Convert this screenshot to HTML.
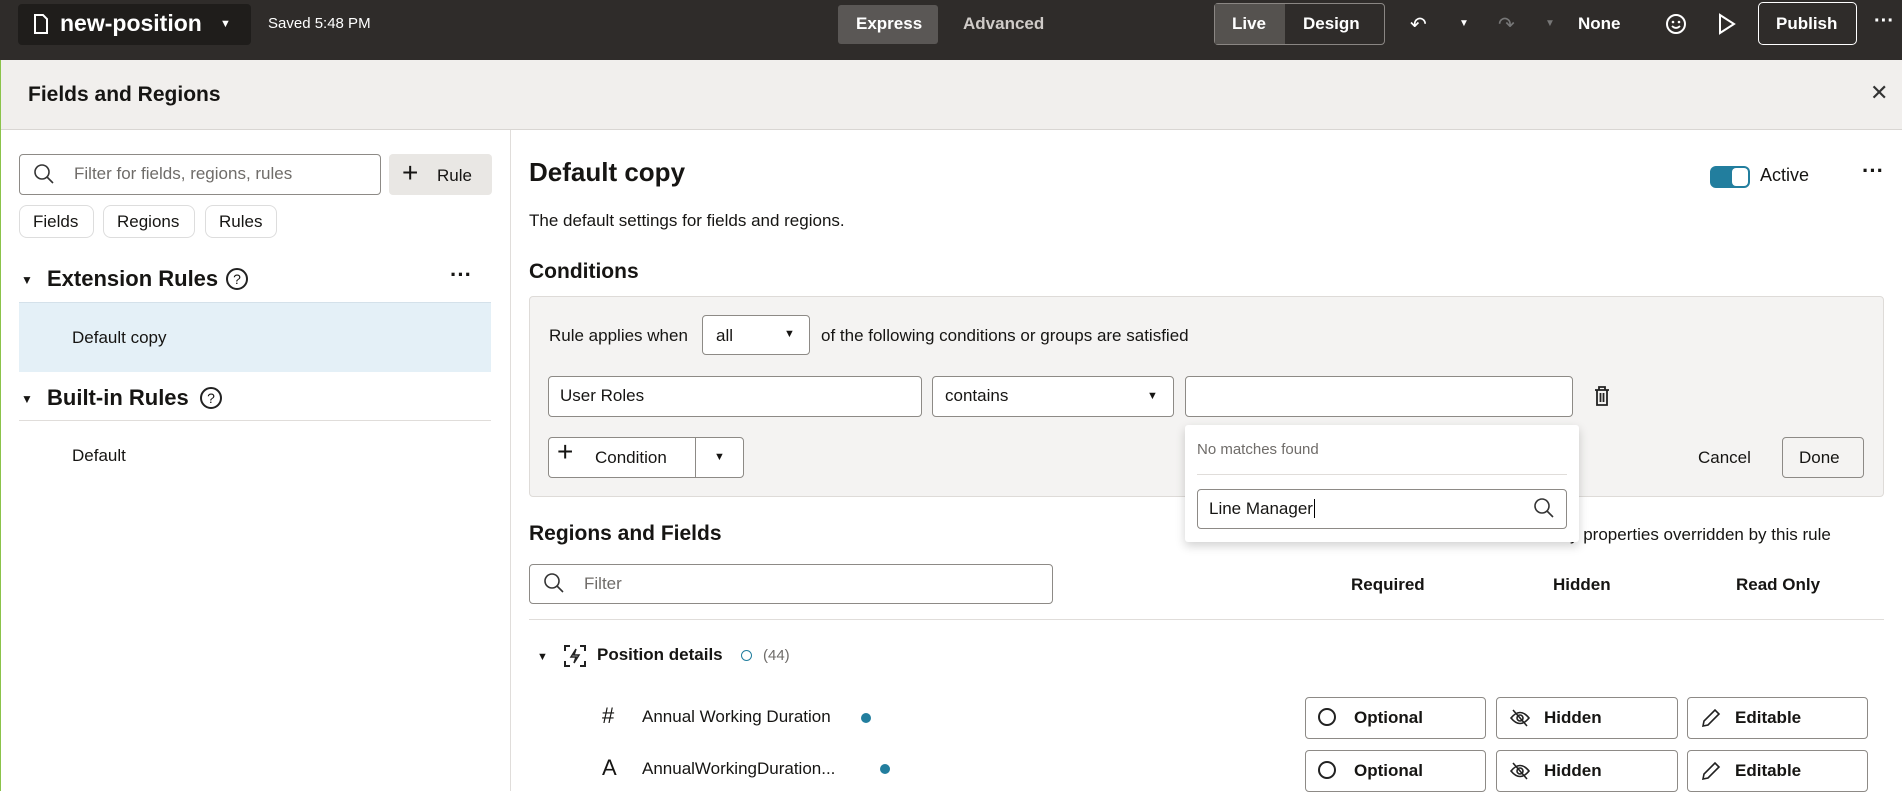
<!DOCTYPE html>
<html><head><meta charset="utf-8"><style>
*{box-sizing:border-box;margin:0;padding:0}
body{width:1902px;height:791px;overflow:hidden;position:relative;background:#fff;font-family:"Liberation Sans",sans-serif;color:#161513}
.a{position:absolute;white-space:nowrap}
.top{left:0;top:0;width:1902px;height:60px;background:#2f2c2a}
.w{color:#fff}
.inp{position:absolute;border:1px solid #8d8a86;border-radius:4px;background:#fff}
.btn{position:absolute;border:1px solid #8d8a86;border-radius:4px;background:#fff;font-size:17px;display:flex;align-items:center}
</style></head><body>
<div class="a top"></div>
<div class="a" style="left:18px;top:4px;width:233px;height:41px;background:#1f1d1b;border-radius:4px"></div>
<svg class="a" style="left:33px;top:14px" width="16" height="20" viewBox="0 0 16 20"><path d="M2 1h8l4 4v14H2z" fill="none" stroke="#fff" stroke-width="2"/></svg>
<div class="a w" style="left:60px;top:10px;font-size:23px;font-weight:bold">new-position</div>
<div class="a w" style="left:220px;top:18px;font-size:11px">▼</div>
<div class="a w" style="left:268px;top:15px;font-size:15px">Saved 5:48 PM</div>
<div class="a" style="left:838px;top:5px;width:100px;height:39px;background:#5a5755;border-radius:3px"></div>
<div class="a w" style="left:856px;top:14px;font-size:17px;font-weight:bold">Express</div>
<div class="a" style="left:963px;top:14px;font-size:17px;font-weight:bold;color:#cfcbc8">Advanced</div>
<div class="a" style="left:1214px;top:3px;width:171px;height:42px;border:1px solid #8a8683;border-radius:4px"></div>
<div class="a" style="left:1215px;top:4px;width:70px;height:40px;background:#55524f"></div>
<div class="a w" style="left:1232px;top:14px;font-size:17px;font-weight:bold">Live</div>
<div class="a w" style="left:1303px;top:14px;font-size:17px;font-weight:bold">Design</div>
<div class="a w" style="left:1410px;top:12px;font-size:20px">↶</div>
<div class="a w" style="left:1459px;top:18px;font-size:10px">▼</div>
<div class="a" style="left:1498px;top:12px;font-size:20px;color:#777">↷</div>
<div class="a" style="left:1545px;top:18px;font-size:10px;color:#777">▼</div>
<div class="a w" style="left:1578px;top:14px;font-size:17px;font-weight:bold">None</div>
<svg class="a" style="left:1665px;top:13px" width="22" height="22" viewBox="0 0 22 22"><circle cx="11" cy="11" r="9" fill="none" stroke="#fff" stroke-width="2"/><circle cx="8" cy="9" r="1.3" fill="#fff"/><circle cx="14" cy="9" r="1.3" fill="#fff"/><path d="M7 13q4 4 8 0" fill="none" stroke="#fff" stroke-width="1.8"/></svg>
<svg class="a" style="left:1718px;top:13px" width="18" height="22" viewBox="0 0 18 22"><path d="M2 2l14 9-14 9z" fill="none" stroke="#fff" stroke-width="2"/></svg>
<div class="a" style="left:1758px;top:2px;width:99px;height:43px;border:1.5px solid #fff;border-radius:5px"></div>
<div class="a w" style="left:1776px;top:14px;font-size:17px;font-weight:bold">Publish</div>
<div class="a w" style="left:1874px;top:10px;font-size:20px;font-weight:bold">···</div>

<div class="a" style="left:0;top:60px;width:1902px;height:70px;background:#f1efed;border-bottom:1px solid #d9d6d3"></div>
<div class="a" style="left:0;top:60px;width:1px;height:731px;background:#8bc34a"></div>
<div class="a" style="left:28px;top:83px;font-size:21px;font-weight:bold">Fields and Regions</div>
<div class="a" style="left:1870px;top:80px;font-size:22px;color:#333">✕</div>
<div class="a" style="left:510px;top:130px;width:1px;height:661px;background:#e0ddda"></div>

<div class="inp" style="left:19px;top:154px;width:362px;height:41px"></div>
<svg class="a" style="left:33px;top:163px" width="22" height="22" viewBox="0 0 22 22"><circle cx="9" cy="9" r="7" fill="none" stroke="#333" stroke-width="1.6"/><path d="M14 14l6 6" stroke="#333" stroke-width="1.6"/></svg>
<div class="a" style="left:74px;top:164px;font-size:17px;color:#6f6c69">Filter for fields, regions, rules</div>
<div class="a" style="left:389px;top:154px;width:103px;height:41px;background:#e9e7e4;border-radius:4px"></div>
<div class="a" style="left:402px;top:157px;font-size:28px;font-weight:300">+</div>
<div class="a" style="left:437px;top:166px;font-size:17px">Rule</div>
<div class="btn" style="left:19px;top:205px;width:75px;height:33px;border-color:#ddd;border-radius:8px;padding-left:13px">Fields</div>
<div class="btn" style="left:103px;top:205px;width:92px;height:33px;border-color:#ddd;border-radius:8px;padding-left:13px">Regions</div>
<div class="btn" style="left:205px;top:205px;width:72px;height:33px;border-color:#ddd;border-radius:8px;padding-left:13px">Rules</div>
<div class="a" style="left:21px;top:273px;font-size:12px">▼</div>
<div class="a" style="left:47px;top:266px;font-size:22px;font-weight:bold">Extension Rules</div>
<div class="a" style="left:226px;top:268px;width:22px;height:22px;border:2px solid #222;border-radius:50%;font-size:14px;text-align:center;line-height:18px">?</div>
<div class="a" style="left:450px;top:262px;font-size:22px;font-weight:bold">···</div>
<div class="a" style="left:19px;top:302px;width:472px;height:70px;background:#e4f0f7;border-top:1px solid #d4e1ea"></div>
<div class="a" style="left:72px;top:328px;font-size:17px">Default copy</div>
<div class="a" style="left:21px;top:392px;font-size:12px">▼</div>
<div class="a" style="left:47px;top:385px;font-size:22px;font-weight:bold">Built-in Rules</div>
<div class="a" style="left:200px;top:387px;width:22px;height:22px;border:2px solid #222;border-radius:50%;font-size:14px;text-align:center;line-height:18px">?</div>
<div class="a" style="left:19px;top:420px;width:472px;height:1px;background:#e0ddda"></div>
<div class="a" style="left:72px;top:446px;font-size:17px">Default</div>

<div class="a" style="left:529px;top:157px;font-size:26px;font-weight:bold">Default copy</div>
<div class="a" style="left:1710px;top:166px;width:40px;height:22px;background:#227e9e;border-radius:6px"></div>
<div class="a" style="left:1732px;top:168px;width:16px;height:18px;background:#fff;border-radius:4px"></div>
<div class="a" style="left:1760px;top:165px;font-size:18px">Active</div>
<div class="a" style="left:1862px;top:158px;font-size:22px;font-weight:bold">···</div>
<div class="a" style="left:529px;top:211px;font-size:17px">The default settings for fields and regions.</div>
<div class="a" style="left:529px;top:260px;font-size:21px;font-weight:bold">Conditions</div>
<div class="a" style="left:529px;top:296px;width:1355px;height:201px;background:#f4f3f2;border:1px solid #dedbd8;border-radius:4px"></div>
<div class="a" style="left:549px;top:326px;font-size:17px">Rule applies when</div>
<div class="inp" style="left:702px;top:315px;width:108px;height:40px"></div>
<div class="a" style="left:716px;top:326px;font-size:17px">all</div>
<div class="a" style="left:784px;top:328px;font-size:11px">▼</div>
<div class="a" style="left:821px;top:326px;font-size:17px">of the following conditions or groups are satisfied</div>
<div class="inp" style="left:548px;top:376px;width:374px;height:41px"></div>
<div class="a" style="left:560px;top:386px;font-size:17px">User Roles</div>
<div class="inp" style="left:932px;top:376px;width:242px;height:41px"></div>
<div class="a" style="left:945px;top:386px;font-size:17px">contains</div>
<div class="a" style="left:1147px;top:390px;font-size:11px">▼</div>
<div class="inp" style="left:1185px;top:376px;width:388px;height:41px"></div>
<svg class="a" style="left:1593px;top:385px" width="18" height="22" viewBox="0 0 18 22"><path d="M2 5h14M6 5V2h6v3M4 5v15h10V5M7.5 8v9M10.5 8v9" fill="none" stroke="#222" stroke-width="1.8"/></svg>
<div class="btn" style="left:548px;top:437px;width:196px;height:41px"></div>
<div class="a" style="left:557px;top:436px;font-size:28px;font-weight:300">+</div>
<div class="a" style="left:595px;top:448px;font-size:17px">Condition</div>
<div class="a" style="left:695px;top:438px;width:1px;height:39px;background:#8d8a86"></div>
<div class="a" style="left:714px;top:451px;font-size:11px">▼</div>
<div class="a" style="left:1698px;top:448px;font-size:17px">Cancel</div>
<div class="btn" style="left:1782px;top:437px;width:82px;height:41px;background:#f4f3f2;padding-left:16px">Done</div>

<div class="a" style="left:529px;top:522px;font-size:21px;font-weight:bold">Regions and Fields</div>
<div class="a" style="left:1570px;top:525px;font-size:17px">y properties overridden by this rule</div>
<div class="inp" style="left:529px;top:564px;width:524px;height:40px"></div>
<svg class="a" style="left:543px;top:572px" width="22" height="22" viewBox="0 0 22 22"><circle cx="9" cy="9" r="7" fill="none" stroke="#333" stroke-width="1.6"/><path d="M14 14l6 6" stroke="#333" stroke-width="1.6"/></svg>
<div class="a" style="left:584px;top:574px;font-size:17px;color:#6f6c69">Filter</div>
<div class="a" style="left:1351px;top:575px;font-size:17px;font-weight:bold">Required</div>
<div class="a" style="left:1553px;top:575px;font-size:17px;font-weight:bold">Hidden</div>
<div class="a" style="left:1736px;top:575px;font-size:17px;font-weight:bold">Read Only</div>
<div class="a" style="left:529px;top:619px;width:1355px;height:1px;background:#e0ddda"></div>

<div class="a" style="left:537px;top:651px;font-size:11px">▼</div>
<svg class="a" style="left:564px;top:645px" width="22" height="22" viewBox="0 0 22 22"><path d="M1 6V1h5M16 1h5v5M21 16v5h-5M6 21H1v-5" fill="none" stroke="#222" stroke-width="2"/><path d="M12 4l-5 8h5l-2 6 5-8h-5z" fill="none" stroke="#222" stroke-width="1.5"/></svg>
<div class="a" style="left:597px;top:645px;font-size:17px;font-weight:bold">Position details</div>
<div class="a" style="left:741px;top:650px;width:11px;height:11px;border:1.5px solid #227e9e;border-radius:50%"></div>
<div class="a" style="left:763px;top:647px;font-size:15px;color:#6f6c69">(44)</div>

<div class="a" style="left:602px;top:703px;font-size:22px">#</div>
<div class="a" style="left:642px;top:707px;font-size:17px">Annual Working Duration</div>
<div class="a" style="left:861px;top:713px;width:10px;height:10px;background:#227e9e;border-radius:50%"></div>
<div class="a" style="left:602px;top:755px;font-size:22px;font-weight:300">A</div>
<div class="a" style="left:642px;top:759px;font-size:17px">AnnualWorkingDuration...</div>
<div class="a" style="left:880px;top:764px;width:10px;height:10px;background:#227e9e;border-radius:50%"></div>

<div class="btn" style="left:1305px;top:697px;width:181px;height:42px;padding-left:48px;font-weight:bold">Optional</div>
<div class="a" style="left:1318px;top:708px;width:18px;height:18px;border:2px solid #222;border-radius:50%"></div>
<div class="btn" style="left:1496px;top:697px;width:182px;height:42px;padding-left:47px;font-weight:bold">Hidden</div>
<svg class="a" style="left:1509px;top:707px" width="22" height="22" viewBox="0 0 22 22"><path d="M2 11q9-11 18 0q-9 11-18 0z" fill="none" stroke="#222" stroke-width="1.6"/><circle cx="11" cy="11" r="3" fill="none" stroke="#222" stroke-width="1.6"/><path d="M4 3l14 16" stroke="#222" stroke-width="1.6"/></svg>
<div class="btn" style="left:1687px;top:697px;width:181px;height:42px;padding-left:47px;font-weight:bold">Editable</div>
<svg class="a" style="left:1700px;top:707px" width="22" height="22" viewBox="0 0 22 22"><path d="M3 19l1-5L15 3l4 4L8 18z" fill="none" stroke="#222" stroke-width="1.6"/></svg>
<div class="btn" style="left:1305px;top:750px;width:181px;height:42px;padding-left:48px;font-weight:bold">Optional</div>
<div class="a" style="left:1318px;top:761px;width:18px;height:18px;border:2px solid #222;border-radius:50%"></div>
<div class="btn" style="left:1496px;top:750px;width:182px;height:42px;padding-left:47px;font-weight:bold">Hidden</div>
<svg class="a" style="left:1509px;top:760px" width="22" height="22" viewBox="0 0 22 22"><path d="M2 11q9-11 18 0q-9 11-18 0z" fill="none" stroke="#222" stroke-width="1.6"/><circle cx="11" cy="11" r="3" fill="none" stroke="#222" stroke-width="1.6"/><path d="M4 3l14 16" stroke="#222" stroke-width="1.6"/></svg>
<div class="btn" style="left:1687px;top:750px;width:181px;height:42px;padding-left:47px;font-weight:bold">Editable</div>
<svg class="a" style="left:1700px;top:760px" width="22" height="22" viewBox="0 0 22 22"><path d="M3 19l1-5L15 3l4 4L8 18z" fill="none" stroke="#222" stroke-width="1.6"/></svg>

<div class="a" style="left:1185px;top:425px;width:394px;height:117px;background:#fff;box-shadow:0 4px 10px rgba(0,0,0,.18);border-radius:3px"></div>
<div class="a" style="left:1197px;top:441px;font-size:15px;color:#6f6c69">No matches found</div>
<div class="a" style="left:1197px;top:474px;width:370px;height:1px;background:#e0ddda"></div>
<div class="inp" style="left:1197px;top:489px;width:370px;height:40px"></div>
<div class="a" style="left:1209px;top:499px;font-size:17px">Line Manager<span style="border-left:1px solid #000;margin-left:1px"></span></div>
<svg class="a" style="left:1533px;top:497px" width="22" height="22" viewBox="0 0 22 22"><circle cx="9" cy="9" r="7" fill="none" stroke="#333" stroke-width="1.6"/><path d="M14 14l6 6" stroke="#333" stroke-width="1.6"/></svg>
</body></html>
